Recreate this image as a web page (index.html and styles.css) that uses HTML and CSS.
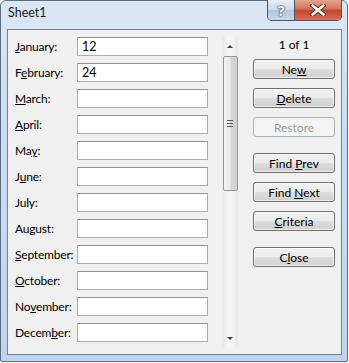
FILE: index.html
```html
<!DOCTYPE html>
<html lang="en">
<head>
  <meta charset="UTF-8" />
  <title>Sheet1</title>
  <link rel="stylesheet" href="styles.css">
</head>
<body>

  <div class="window">
    <div class="titlebar">
      <span class="title">Sheet1</span>
      <div class="caption-buttons">
        <span class="cap-btn help">?</span>
        <span class="cap-btn close">
          <svg width="18" height="12" viewBox="0 0 18 12">
            <path d="M3.5 1.5 L14.5 10.5 M14.5 1.5 L3.5 10.5" stroke="#5a2a22" stroke-width="4.4" stroke-linecap="square"/>
            <path d="M3.5 1.5 L14.5 10.5 M14.5 1.5 L3.5 10.5" stroke="#fff" stroke-width="2.6" stroke-linecap="square"/>
          </svg>
        </span>
      </div>
    </div>

    <div class="client">
      <div class="fields">
        <div class="row"><label><u>J</u>anuary:</label><input type="text" value="12"></div>
        <div class="row"><label>F<u>e</u>bruary:</label><input type="text" value="24"></div>
        <div class="row"><label><u>M</u>arch:</label><input type="text"></div>
        <div class="row"><label><u>A</u>pril:</label><input type="text"></div>
        <div class="row"><label>Ma<u>y</u>:</label><input type="text"></div>
        <div class="row"><label>J<u>u</u>ne:</label><input type="text"></div>
        <div class="row"><label>July:</label><input type="text"></div>
        <div class="row"><label>Au<u>g</u>ust:</label><input type="text"></div>
        <div class="row"><label><u>S</u>eptember:</label><input type="text"></div>
        <div class="row"><label><u>O</u>ctober:</label><input type="text"></div>
        <div class="row"><label>No<u>v</u>ember:</label><input type="text"></div>
        <div class="row"><label>Decem<u>b</u>er:</label><input type="text"></div>
      </div>

      <div class="scrollbar">
        <div class="arrow up"></div>
        <div class="thumb"><span class="grip"></span></div>
        <div class="track"></div>
        <div class="arrow down"></div>
      </div>

      <div class="actions">
        <div class="counter">1 of 1</div>
        <button>Ne<u>w</u></button>
        <button><u>D</u>elete</button>
        <button disabled>Restore</button>
        <button class="group">Find <u>P</u>rev</button>
        <button>Find <u>N</u>ext</button>
        <button><u>C</u>riteria</button>
        <button class="group">C<u>l</u>ose</button>
      </div>
    </div>
  </div>

</body>
</html>
```

FILE: styles.css
```css
* {
  margin: 0;
  padding: 0;
  box-sizing: border-box;
}

body {
  background: #ffffff;
  font-family: "Segoe UI", Lato, "Noto Sans", sans-serif;
  font-size: 12px;
  color: #000;
}

/* Aero style window frame */
.window {
  width: 348px;
  height: 362px;
  border: 1px solid #5d6d80;
  border-radius: 6px 6px 2px 2px;
  background: linear-gradient(to bottom, #dbe7f5 0%, #c9dcf2 40%, #bfd5ef 100%);
  display: flex;
  flex-direction: column;
}

.titlebar {
  height: 28px;
  display: flex;
  justify-content: space-between;
  align-items: flex-start;
}

.title {
  padding: 4px 0 0 7px;
  font-size: 12.5px;
  color: #1a1a1a;
}

.caption-buttons {
  display: flex;
  margin: -1px 5px 0 0;
  border: 1px solid #4a5667;
  border-top: none;
  border-radius: 0 0 5px 5px;
  overflow: hidden;
}

.cap-btn {
  height: 20px;
  display: flex;
  align-items: center;
  justify-content: center;
}

.help {
  width: 27px;
  border-right: 1px solid #4a5667;
  background: linear-gradient(to bottom, #e6eef8 0%, #cdd9e8 50%, #b4c6dc 51%, #c8d7ea 100%);
  color: #fff;
  font-family: "Noto Sans", sans-serif;
  font-size: 15px;
  font-weight: bold;
  text-shadow: 0 0 1px #3b4a5e, 0 0 1px #3b4a5e, 0 0 2px #3b4a5e;
}

.close {
  width: 46px;
  background: linear-gradient(to bottom, #e8a493 0%, #d4715b 45%, #c2452c 52%, #d66f52 100%);
}

/* Client area */
.client {
  flex: 1;
  margin: 0 5px 6px 6px;
  border: 1px solid #6d82a0;
  background: #f0f0f0;
  display: flex;
}

.fields {
  padding: 7px 0 0 7px;
  display: flex;
  flex-direction: column;
  gap: 7px;
}

.row {
  display: flex;
  align-items: center;
  height: 19px;
}

.row label {
  width: 62px;
  white-space: nowrap;
  letter-spacing: -0.2px;
}

.row input {
  width: 131px;
  height: 19px;
  border: 1px solid #abadb3;
  border-top-color: #8f949c;
  background: #fff;
  padding: 0 4px;
  font-family: inherit;
  font-size: 12.5px;
  color: #000;
  outline: none;
}

/* Vertical scrollbar */
.scrollbar {
  width: 16px;
  margin: 7px 0 6px 14px;
  background: linear-gradient(to right, #e8e8e8, #f4f4f4 40%, #f4f4f4 60%, #e8e8e8);
  display: flex;
  flex-direction: column;
  align-items: center;
}

.arrow {
  height: 19px;
  width: 100%;
  display: flex;
  align-items: center;
  justify-content: center;
}

.arrow::before {
  content: "";
  border-left: 3px solid transparent;
  border-right: 3px solid transparent;
}

.arrow.up::before {
  border-bottom: 3px solid #404040;
}

.arrow.down::before {
  border-top: 3px solid #404040;
}

.thumb {
  width: 15px;
  height: 135px;
  border: 1px solid #979797;
  border-radius: 2px;
  background: linear-gradient(to right, #f4f4f4 0%, #eaeaea 45%, #d6d6d6 55%, #cfcfcf 100%);
  display: flex;
  align-items: center;
  justify-content: center;
}

.grip {
  width: 6px;
  height: 7px;
  border-top: 1px solid #555;
  border-bottom: 1px solid #555;
  background: linear-gradient(to bottom, transparent 2px, #555 2px, #555 3px, transparent 3px);
}

.track {
  flex: 1;
}

/* Command buttons */
.actions {
  margin-left: 15px;
  padding-top: 7px;
  width: 82px;
  display: flex;
  flex-direction: column;
  gap: 9px;
}

.counter {
  height: 13px;
  line-height: 16px;
  text-align: center;
}

.actions button {
  height: 20px;
  border: 1px solid #707070;
  border-radius: 3px;
  background: linear-gradient(to bottom, #f2f2f2 0%, #ebebeb 50%, #dddddd 51%, #cfcfcf 100%);
  font-family: inherit;
  font-size: 12px;
  color: #000;
  box-shadow: inset 0 0 0 1px rgba(255, 255, 255, 0.7);
}

.actions button:disabled {
  border-color: #adb2b5;
  background: #f4f4f4;
  color: #9a9a9a;
  box-shadow: none;
}

.actions button.group {
  margin-top: 7px;
}
```
